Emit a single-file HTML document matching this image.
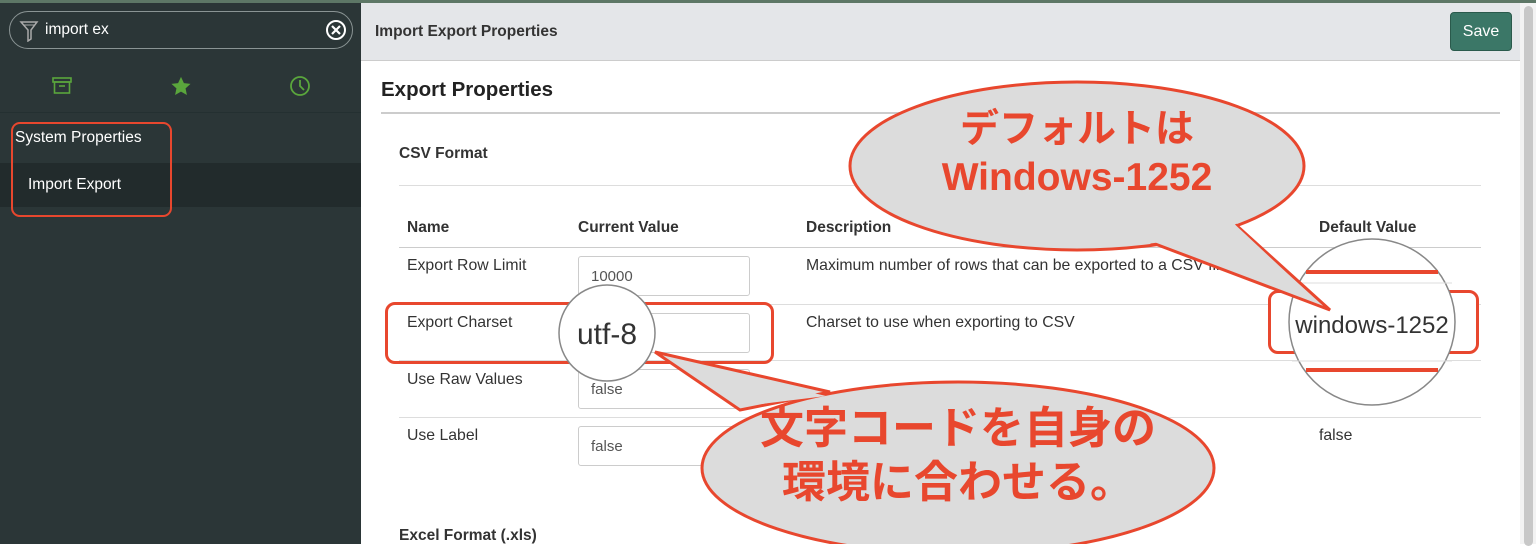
<!DOCTYPE html>
<html><head><meta charset="utf-8"><style>
*{margin:0;padding:0;box-sizing:border-box}
body{width:1536px;height:544px;overflow:hidden;position:relative;background:#fff;font-family:"Liberation Sans",Arial,sans-serif;color:#333}
.abs{position:absolute}
#side{left:0;top:0;width:361px;height:544px;background:#2b3637}
#topline{left:0;top:0;width:1536px;height:3px;background:#5d7766}
.search{left:9px;top:11px;width:344px;height:38px;border:1px solid #8a9494;border-radius:19px}
.t{font-size:15.5px;color:#fff}
#hdr{left:361px;top:3px;width:1159px;height:58px;background:#e4e6e9;border-bottom:1px solid #ccc}
#sb{left:1520px;top:3px;width:16px;height:541px;background:#f3f3f3}
#sbthumb{left:1524px;top:6px;width:9px;height:540px;background:#c8c8c8;border-radius:5px}
.th{font-weight:bold;font-size:15.5px;color:#333}
.td{font-size:15.8px;color:#333}
.line{height:1px;background:#ddd}
.inp{width:172px;height:40px;border:1px solid #ccc;border-radius:3px;font-size:15px;color:#555;padding:11px 12px}
.jp{font-family:"Liberation Sans","Noto Sans CJK JP",sans-serif;font-weight:bold;color:#e8472e;text-align:center}
</style></head><body>
<div id="side" class="abs"></div>
<div id="topline" class="abs"></div>
<div class="search abs"></div>
<svg class="abs" style="left:19px;top:20px" width="20" height="22" viewBox="0 0 20 22"><path d="M2 2h16l-6 8v9l-3 2v-11z" fill="none" stroke="#aaa" stroke-width="1.5"/><path d="M4 5h12" stroke="#aaa"/></svg>
<div class="abs t" style="left:45px;top:21px">import ex</div>
<svg class="abs" style="left:325px;top:19px" width="22" height="22"><circle cx="11" cy="11" r="9" fill="none" stroke="#fff" stroke-width="2"/><path d="M7 7l8 8M15 7l-8 8" stroke="#fff" stroke-width="2.2"/></svg>
<div class="abs" style="left:0;top:58px;width:361px;height:55px;border-bottom:1px solid #243031"></div>
<svg class="abs" style="left:51px;top:76px" width="22" height="20"><rect x="2" y="2" width="18" height="4" fill="none" stroke="#5aa63c" stroke-width="1.6"/><rect x="3.5" y="6" width="15" height="11" fill="none" stroke="#5aa63c" stroke-width="1.6"/><path d="M8 10h6" stroke="#5aa63c" stroke-width="1.6"/></svg>
<svg class="abs" style="left:170px;top:76px" width="22" height="20" viewBox="0 0 24 22"><path d="M12 1l3.2 6.8 7.3.8-5.5 5 1.5 7.3L12 17.2 5.5 20.9 7 13.6 1.5 8.6l7.3-.8z" fill="#5aa63c"/></svg>
<svg class="abs" style="left:289px;top:75px" width="22" height="22"><circle cx="11" cy="11" r="9" fill="none" stroke="#5aa63c" stroke-width="1.8"/><path d="M11 5v6l4 4" fill="none" stroke="#5aa63c" stroke-width="1.8"/></svg>
<div class="abs t" style="left:15px;top:129px">System Properties</div>
<div class="abs" style="left:0;top:163px;width:361px;height:44px;background:#222b2c"></div>
<div class="abs t" style="left:28px;top:176px">Import Export</div>
<div class="abs" style="left:11px;top:122px;width:161px;height:95px;border:2.5px solid #e8472e;border-radius:9px"></div>

<div id="hdr" class="abs"></div>
<div class="abs" style="left:375px;top:23px;font-size:15.5px;font-weight:bold;color:#333">Import Export Properties</div>
<div class="abs" style="left:1450px;top:12px;width:62px;height:39px;background:#3b7767;border:1px solid #2a5a4c;border-radius:4px;color:#fff;font-size:16px;text-align:center;line-height:37px">Save</div>
<div id="sb" class="abs"></div><div id="sbthumb" class="abs"></div>

<div class="abs" style="left:381px;top:78px;font-size:20.5px;font-weight:bold;color:#222">Export Properties</div>
<div class="abs" style="left:381px;top:112px;width:1119px;height:2px;background:#ccc"></div>
<div class="abs th" style="left:399px;top:145px">CSV Format</div>
<div class="abs line" style="left:399px;top:185px;width:1082px"></div>
<div class="abs th" style="left:407px;top:219px">Name</div>
<div class="abs th" style="left:578px;top:219px">Current Value</div>
<div class="abs th" style="left:806px;top:219px">Description</div>
<div class="abs th" style="left:1319px;top:219px">Default Value</div>
<div class="abs line" style="left:399px;top:247px;width:1082px;background:#ccc"></div>
<div class="abs line" style="left:399px;top:304px;width:1082px"></div>
<div class="abs line" style="left:399px;top:360px;width:1082px"></div>
<div class="abs line" style="left:399px;top:417px;width:1082px"></div>
<div class="abs td" style="left:407px;top:257px">Export Row Limit</div>
<div class="abs td" style="left:407px;top:314px">Export Charset</div>
<div class="abs td" style="left:407px;top:371px">Use Raw Values</div>
<div class="abs td" style="left:407px;top:427px">Use Label</div>
<div class="abs inp" style="left:578px;top:256px">10000</div>
<div class="abs inp" style="left:578px;top:313px"></div>
<div class="abs inp" style="left:578px;top:369px">false</div>
<div class="abs inp" style="left:578px;top:426px">false</div>
<div class="abs td" style="left:806px;top:257px">Maximum number of rows that can be exported to a CSV file</div>
<div class="abs td" style="left:806px;top:314px">Charset to use when exporting to CSV</div>
<div class="abs td" style="left:1319px;top:427px">false</div>
<div class="abs th" style="left:399px;top:527px">Excel Format (.xls)</div>

<div class="abs" style="left:385px;top:302px;width:389px;height:62px;border:3px solid #e8472e;border-radius:10px"></div>
<div class="abs" style="left:1268px;top:290px;width:211px;height:64px;border:3px solid #e8472e;border-radius:10px;background:#fff"></div>

<svg class="abs" style="left:0;top:0" width="1536" height="544">
<circle cx="607" cy="333" r="48" fill="#fff" stroke="#888" stroke-width="1.5"/>
<circle cx="1372" cy="322" r="83" fill="#fff" stroke="#888" stroke-width="1.5"/>
<path d="M1306 272h132M1306 370h132" stroke="#e8472e" stroke-width="4"/>
<path d="M1292 283h160M1292 361h160" stroke="#ddd" stroke-width="1"/>
<g fill="#dcdcdc" stroke="#e8472e" stroke-width="3">
<ellipse cx="1077" cy="166" rx="227" ry="84"/>
<path d="M1150 242L1330 310L1225 215z"/>
<ellipse cx="958" cy="468" rx="256" ry="86"/>
<path d="M740 410L655 352L830 392z"/>
</g>
<g fill="#dcdcdc"><ellipse cx="1077" cy="166" rx="225" ry="82"/><path d="M1155 238L1320 304L1228 218z"/>
<ellipse cx="958" cy="468" rx="254" ry="84"/><path d="M745 406L665 357L826 396z"/></g>
<text x="607" y="344" font-family="Liberation Sans" font-size="30" fill="#333" text-anchor="middle">utf-8</text>
<text x="1372" y="333" font-family="Liberation Sans" font-size="24" fill="#333" text-anchor="middle">windows-1252</text>
</svg>
<div class="abs jp" style="left:857px;top:106px;width:440px;font-size:39px;line-height:48px">デフォルトは<br>Windows-1252</div>
<div class="abs jp" style="left:700px;top:402px;width:516px;font-size:44px;line-height:54px">文字コードを自身の<br>環境に合わせる。</div>
</body></html>
